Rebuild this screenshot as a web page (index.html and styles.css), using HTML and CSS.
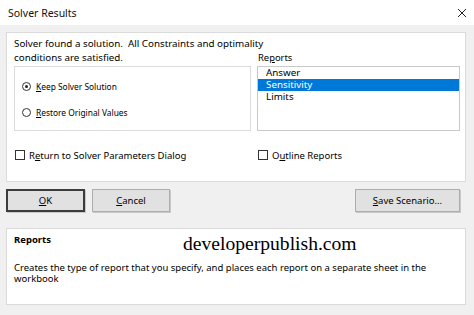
FILE: index.html
```html
<!DOCTYPE html>
<html lang="en">

<head>
    <title>Solver Results</title>
    <meta charset="UTF-8">
    <link rel="stylesheet" href="styles.css">
</head>

<body>
    <div class="sr-titlebar">
        <span>Solver Results</span>
        <svg class="sr-close" width="10" height="10" viewBox="0 0 10 10">
            <path d="M1 1 L9 9 M9 1 L1 9" />
        </svg>
    </div>

    <div class="sr-dialog">
        <div class="sr-panel sr-main">
            <p class="sr-intro">Solver found a solution.&nbsp; All Constraints and optimality<br>conditions are satisfied.</p>
            <div class="sr-list-label">Re<u>p</u>orts</div>

            <div class="sr-options">
                <label class="sr-radio"><span class="sr-dot sr-checked"></span><u>K</u>eep Solver Solution</label>
                <label class="sr-radio"><span class="sr-dot"></span><u>R</u>estore Original Values</label>
            </div>
            <ul class="sr-listbox">
                <li>Answer</li>
                <li class="sr-selected">Sensitivity</li>
                <li>Limits</li>
            </ul>

            <label class="sr-check"><span class="sr-box"></span>R<u>e</u>turn to Solver Parameters Dialog</label>
            <label class="sr-check"><span class="sr-box"></span>O<u>u</u>tline Reports</label>
        </div>

        <div class="sr-buttons">
            <button class="sr-btn sr-default"><u>O</u>K</button>
            <button class="sr-btn"><u>C</u>ancel</button>
            <button class="sr-btn sr-save"><u>S</u>ave Scenario...</button>
        </div>

        <div class="sr-panel sr-help">
            <h4>Reports</h4>
            <p>Creates the type of report that you specify, and places each report on a separate sheet in the workbook</p>
            <div class="sr-watermark">developerpublish.com</div>
        </div>
    </div>
</body>

</html>
```

FILE: styles.css
```css
* {
    box-sizing: border-box;
    font-family: 'Noto Sans', sans-serif;
}

body {
    margin: 0;
    width: 474px;
    height: 315px;
    overflow: hidden;
    background-color: #f0f0f0;
    color: #000;
    font-size: 10px;
}

u {
    text-decoration: underline;
    text-underline-offset: 1px;
}

.sr-titlebar {
    height: 25px;
    background-color: #ffffff;
    display: flex;
    align-items: center;
    justify-content: space-between;
    padding: 0 7px 0 8px;
    font-size: 10.5px;
    color: #111;
}

.sr-close path {
    stroke: #222;
    stroke-width: 1;
    fill: none;
}

.sr-dialog {
    padding: 7px 8px 0 6px;
}

.sr-panel {
    background-color: #ffffff;
    border: 1px solid #dadada;
}

.sr-main {
    height: 150px;
    padding: 4px 6px 0 7px;
    display: grid;
    grid-template-columns: 237px 203px;
    column-gap: 6px;
    align-content: start;
}

.sr-intro {
    margin: 0 0 1px;
    width: 260px;
    white-space: nowrap;
    font-size: 9.8px;
    line-height: 14px;
}

.sr-list-label {
    align-self: end;
    padding-left: 1px;
    font-size: 9.4px;
    line-height: 14px;
    margin-bottom: 1px;
}

.sr-options {
    height: 65px;
    border: 1px solid #dcdcdc;
    padding: 12px 0 0 7px;
    display: flex;
    flex-direction: column;
    gap: 12px;
}

.sr-radio,
.sr-check {
    display: flex;
    align-items: center;
    height: 14px;
}

.sr-radio {
    font-size: 8.4px;
}

.sr-dot {
    width: 9px;
    height: 9px;
    border: 1px solid #333;
    border-radius: 50%;
    margin-right: 5px;
    display: flex;
    align-items: center;
    justify-content: center;
}

.sr-checked:after {
    content: "";
    width: 3px;
    height: 3px;
    border-radius: 50%;
    background-color: #222;
}

.sr-listbox {
    height: 65px;
    margin: 0;
    padding: 0;
    list-style: none;
    border: 1px solid #c9c9c9;
}

.sr-listbox li {
    height: 12px;
    line-height: 12px;
    padding-left: 8px;
    font-size: 9.8px;
}

.sr-listbox .sr-selected {
    background-color: #0078d7;
    color: #ffffff;
}

.sr-check {
    margin-top: 17px;
    font-size: 9.5px;
}

.sr-box {
    width: 10px;
    height: 10px;
    border: 1px solid #333;
    margin: 0 4px 0 1px;
}

.sr-buttons {
    display: flex;
    gap: 7px;
    margin-top: 7px;
}

.sr-btn {
    height: 23px;
    width: 78px;
    padding: 0;
    background-color: #e1e1e1;
    border: 1px solid #adadad;
    box-shadow: 1px 1px 0 #c8c8c8;
    font-size: 9.5px;
    color: #000;
}

.sr-default {
    width: 79px;
    border: 2px solid #3c3c3c;
}

.sr-save {
    width: 105px;
    margin-left: auto;
    margin-right: 6px;
}

.sr-help {
    position: relative;
    height: 77px;
    margin-top: 16px;
    padding: 5px 8px 0 7px;
}

.sr-help h4 {
    margin: 0;
    font-size: 9.5px;
    line-height: 12px;
}

.sr-help p {
    margin: 16px 0 0;
    font-size: 9.5px;
    line-height: 11px;
}

.sr-watermark {
    position: absolute;
    left: 176px;
    top: 4px;
    font-family: 'Liberation Serif', serif;
    font-size: 19.6px;
    color: #000;
}
```
